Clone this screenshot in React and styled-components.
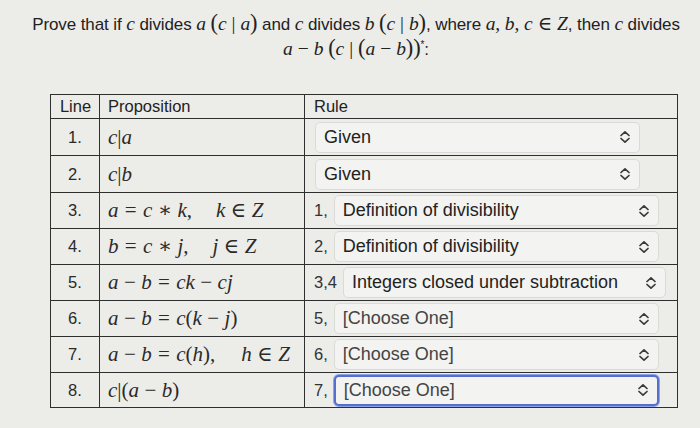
import React from 'react'
import styled, { createGlobalStyle } from 'styled-components'

const Global = createGlobalStyle`
  body {
    margin: 0;
    background: #ecece9;
    font-family: "Liberation Sans", Arial, sans-serif;
    color: #222;
  }
`;

const Page = styled.div`
  width: 700px;
  padding-top: 12px;
  box-sizing: border-box;
`;

const Question = styled.p`
  margin: 0 0 32px;
  padding-left: 12px;
  text-align: center;
  font-size: 17px;
  line-height: 24px;
  letter-spacing: -0.1px;
`;

const M = styled.span`
  font-family: "Liberation Serif", "DejaVu Serif", serif;
  font-size: 19.5px;
  line-height: 1;
  white-space: nowrap;
`;

const V = styled.i`
  font-family: "Liberation Serif", "DejaVu Serif", serif;
  font-style: italic;
`;

const Op = styled.span`
  font-style: normal;
  margin: 0 ${p => p.$space || 0.26}em;
`;

const Paren = styled.span`
  font-size: ${p => p.$big ? '1.15em' : '1em'};
  line-height: 1;
`;

const Star = styled.sup`
  font-size: 10px;
  line-height: 0;
`;

const Grid = styled.div`
  margin-left: 50px;
  width: 628px;
  box-sizing: border-box;
  display: grid;
  grid-template-columns: 49px 205px 373px;
  grid-template-rows: 24px 37px 37px repeat(5, 36px) 35px;
  border-top: 1px solid #2f2f2f;
  border-left: 1px solid #2f2f2f;
`;

const Cell = styled.div`
  box-sizing: border-box;
  display: flex;
  align-items: center;
  justify-content: ${p => p.$center ? 'center' : 'flex-start'};
  padding-left: ${p => p.$pad || 0}px;
  border-right: 1px solid #2f2f2f;
  border-bottom: 1px solid #2f2f2f;
  font-size: 16.5px;
  color: ${p => p.$head ? '#222' : '#2a2a2a'};
  min-width: 0;
`;

const Prop = styled.div`
  font-family: "Liberation Serif", "DejaVu Serif", serif;
  font-size: 21px;
  white-space: nowrap;
`;

const Prefix = styled.span`
  font-size: 16.5px;
  color: #333;
  margin-right: 6px;
`;

const Select = styled.div`
  display: flex;
  align-items: center;
  justify-content: space-between;
  width: ${p => p.$wide ? 323 : 325}px;
  height: 31px;
  box-sizing: border-box;
  margin-left: ${p => p.$offset || 0}px;
  padding: 0 8px 0 8px;
  background: #f3f3f1;
  border: ${p => p.$focus ? '2px solid #5470cc' : '1px solid #dadad7'};
  border-radius: 5px;
  box-shadow: ${p => p.$focus ? '0 0 0 1px #8fa3e6' : 'none'};
  font-size: 18px;
  color: ${p => p.$placeholder ? '#444' : '#222'};
`;

const Chevrons = () => (
  <svg width="12" height="14" viewBox="0 0 12 14" fill="none" stroke="#3a3a3a" strokeWidth="1.7" strokeLinecap="round" strokeLinejoin="round">
    <path d="M2 5.5 L6 1.8 L10 5.5" />
    <path d="M2 8.5 L6 12.2 L10 8.5" />
  </svg>
);

const Quad = styled.span`
  display: inline-block;
  width: ${p => p.$w || 24}px;
`;

const rows = [
  { n: '1.', prop: <><V>c</V>|<V>a</V></>, rule: 'Given', offset: 1 },
  { n: '2.', prop: <><V>c</V>|<V>b</V></>, rule: 'Given', offset: 1 },
  { n: '3.', prop: <><V>a</V><Op $space={0.3}>=</Op><V>c</V><Op>∗</Op><V>k</V>,<Quad /><V>k</V><Op>∈</Op><V>Z</V></>, pre: '1,', rule: 'Definition of divisibility' },
  { n: '4.', prop: <><V>b</V><Op $space={0.3}>=</Op><V>c</V><Op>∗</Op><V>j</V>,<Quad /><V>j</V><Op>∈</Op><V>Z</V></>, pre: '2,', rule: 'Definition of divisibility' },
  { n: '5.', prop: <><V>a</V><Op>−</Op><V>b</V><Op $space={0.3}>=</Op><V>ck</V><Op>−</Op><V>cj</V></>, pre: '3,4', rule: 'Integers closed under subtraction', wide: true },
  { n: '6.', prop: <><V>a</V><Op>−</Op><V>b</V><Op $space={0.3}>=</Op><V>c</V>(<V>k</V><Op>−</Op><V>j</V>)</>, pre: '5,', rule: '[Choose One]', ph: true },
  { n: '7.', prop: <><V>a</V><Op>−</Op><V>b</V><Op $space={0.3}>=</Op><V>c</V>(<V>h</V>),<Quad $w={26} /><V>h</V><Op>∈</Op><V>Z</V></>, pre: '6,', rule: '[Choose One]', ph: true },
  { n: '8.', prop: <><V>c</V>|(<V>a</V><Op>−</Op><V>b</V>)</>, pre: '7,', rule: '[Choose One]', ph: true, focus: true },
];

const App = () => {
  return (
    <Page>
      <Global />
      <Question>
        Prove that if <M><V>c</V></M> divides <M><V>a</V></M> <M><Paren $big>(</Paren><V>c</V><Op>|</Op><V>a</V><Paren $big>)</Paren></M> and <M><V>c</V></M> divides <M><V>b</V></M> <M><Paren $big>(</Paren><V>c</V><Op>|</Op><V>b</V><Paren $big>)</Paren></M>, where <M><V>a</V>, <V>b</V>, <V>c</V><Op>∈</Op><V>Z</V></M>, then <M><V>c</V></M> divides
        <br />
        <M><V>a</V><Op>−</Op><V>b</V> <Paren $big>(</Paren><V>c</V><Op>|</Op><Paren $big>(</Paren><V>a</V><Op>−</Op><V>b</V><Paren $big>))</Paren></M><Star>*</Star>:
      </Question>
      <Grid>
        <Cell $head $center $pad={1}>Line</Cell>
        <Cell $head $pad={8}>Proposition</Cell>
        <Cell $head $pad={9}>Rule</Cell>
        {rows.map(r => (
          <React.Fragment key={r.n}>
            <Cell $center>{r.n}</Cell>
            <Cell $pad={8}><Prop>{r.prop}</Prop></Cell>
            <Cell $pad={9}>
              {r.pre && <Prefix>{r.pre}</Prefix>}
              <Select $offset={r.offset} $focus={r.focus} $placeholder={r.ph} $wide={r.wide}>
                <span>{r.rule}</span>
                <Chevrons />
              </Select>
            </Cell>
          </React.Fragment>
        ))}
      </Grid>
    </Page>
  )
}

export default App
